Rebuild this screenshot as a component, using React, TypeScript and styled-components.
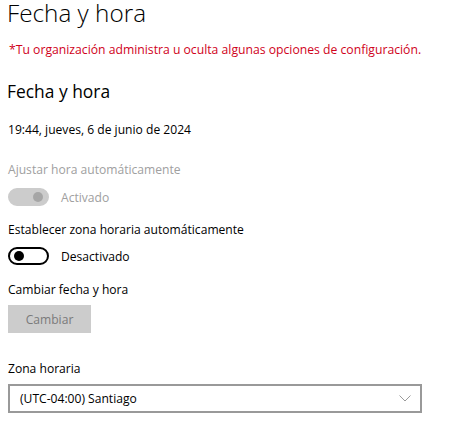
import React from 'react';
import styled, { createGlobalStyle } from 'styled-components';

const GlobalStyle = createGlobalStyle`
    body {
        margin: 0;
        background: #ffffff;
        font-family: 'Open Sans', 'Noto Sans', sans-serif;
        color: #000000;
    }
`;

const Page = styled.div`
    width: 474px;
    height: 427px;
    overflow: hidden;
    padding: 0 0 0 8px;
    box-sizing: border-box;
    display: flex;
    flex-direction: column;
`;

const Title = styled.h1`
    margin: 0 0 0 -1px;
    font-size: 24.3px;
    font-weight: 300;
    line-height: 26px;
`;

const Notice = styled.p`
    margin: 15px 0 0 1px;
    font-size: 12.2px;
    line-height: 18px;
    color: #d0021b;
`;

const Heading = styled.h2`
    margin: 19px 0 0 -1px;
    font-size: 17.4px;
    font-weight: 400;
    line-height: 26px;
`;

const Line = styled.div<{ $muted?: boolean; $top: number }>`
    margin-top: ${(p) => p.$top}px;
    font-size: 12.1px;
    line-height: 20px;
    color: ${(p) => (p.$muted ? '#a0a0a0' : '#000000')};
`;

const ToggleRow = styled.div<{ $top: number }>`
    display: flex;
    align-items: center;
    gap: 12px;
    margin-top: ${(p) => p.$top}px;
    height: 18px;
`;

const Track = styled.div<{ $on: boolean; $disabled?: boolean }>`
    width: 41px;
    height: 18px;
    box-sizing: border-box;
    border-radius: 9px;
    display: flex;
    align-items: center;
    justify-content: ${(p) => (p.$on ? 'flex-end' : 'flex-start')};
    padding: 0 4px;
    background: ${(p) => (p.$disabled ? '#cccccc' : '#ffffff')};
    border: 2px solid ${(p) => (p.$disabled ? '#cccccc' : '#000000')};
`;

const Knob = styled.span<{ $disabled?: boolean }>`
    width: 10px;
    height: 10px;
    border-radius: 50%;
    background: ${(p) => (p.$disabled ? '#a6a6a6' : '#000000')};
`;

const ToggleLabel = styled.span<{ $muted?: boolean }>`
    font-size: 12.1px;
    color: ${(p) => (p.$muted ? '#a0a0a0' : '#000000')};
`;

const Button = styled.button`
    margin-top: 5px;
    width: 83px;
    height: 28px;
    border: none;
    background: #cccccc;
    color: #7a7a7a;
    font-family: inherit;
    font-size: 12.1px;
    padding: 0;
`;

const Select = styled.div`
    margin-top: 5px;
    width: 414px;
    height: 29px;
    box-sizing: border-box;
    border: 2px solid #999999;
    display: flex;
    align-items: center;
    justify-content: space-between;
    padding: 0 9px 0 10px;
    font-size: 12.1px;
`;

const Chevron = () => (
    <svg width="12" height="7" viewBox="0 0 12 7" fill="none">
        <path d="M0.5 0.5 L6 6 L11.5 0.5" stroke="#9a9a9a" strokeWidth="1" />
    </svg>
);

const Toggle = ({ on, disabled, label, top }: { on: boolean; disabled?: boolean; label: string; top: number }) => (
    <ToggleRow $top={top}>
        <Track $on={on} $disabled={disabled}>
            <Knob $disabled={disabled} />
        </Track>
        <ToggleLabel $muted={disabled}>{label}</ToggleLabel>
    </ToggleRow>
);

export default function App() {
    return (
        <>
            <GlobalStyle />
            <Page>
                <Title>Fecha y hora</Title>
                <Notice>*Tu organización administra u oculta algunas opciones de configuración.</Notice>
                <Heading>Fecha y hora</Heading>
                <Line $top={16}>19:44, jueves, 6 de junio de 2024</Line>
                <Line $top={20} $muted>Ajustar hora automáticamente</Line>
                <Toggle on disabled label="Activado" top={8} />
                <Line $top={14}>Establecer zona horaria automáticamente</Line>
                <Toggle on={false} label="Desactivado" top={7} />
                <Line $top={15}>Cambiar fecha y hora</Line>
                <Button disabled>Cambiar</Button>
                <Line $top={26}>Zona horaria</Line>
                <Select>
                    <span>(UTC-04:00) Santiago</span>
                    <Chevron />
                </Select>
            </Page>
        </>
    );
}
